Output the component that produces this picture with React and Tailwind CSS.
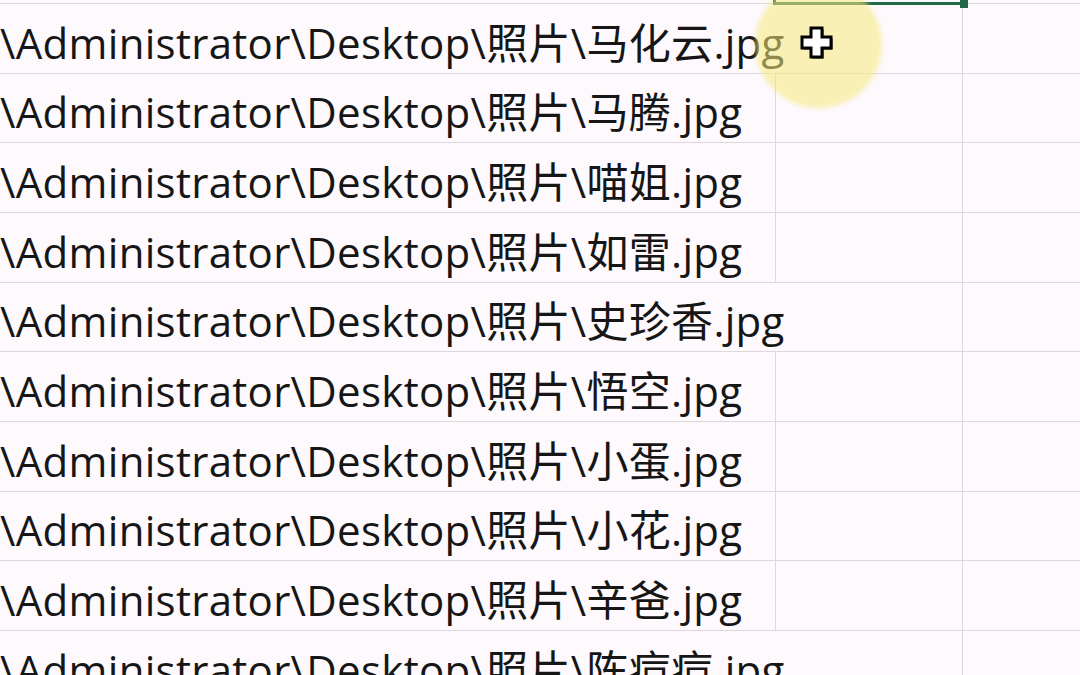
const names = ['马化云', '马腾', '喵姐', '如雷', '史珍香', '悟空', '小蛋', '小花', '辛爸', '陈痘痘'];
const overflow = ['马化云', '史珍香', '陈痘痘'];

function Row({ name }) {
  const long = overflow.includes(name);
  return (
    <div className="flex h-[69.67px] shrink-0 border-b border-[#dcd8dc]">
      <div
        className={
          'w-[776px] shrink-0 flex items-end pb-0 whitespace-nowrap overflow-visible ' +
          (long ? '' : 'border-r border-[#dcd8dc]')
        }
      >
        <span className="relative z-10 text-[42px] tracking-[0.3px] leading-[60px] text-[#161616] font-['Open_Sans','Noto_Sans_CJK_SC',sans-serif]">
          \Administrator\Desktop\照片\{name}.jpg
        </span>
      </div>
      <div className="w-[187px] shrink-0 border-r border-[#dcd8dc]" />
      <div className="flex-1" />
    </div>
  );
}

function Cursor() {
  return (
    <svg width="36" height="36" viewBox="0 0 36 36" className="absolute left-[799px] top-[25px] z-30">
      <path d="M12 3h11v9h9v11h-9v9H12v-9H3V12h9z" fill="#111" transform="translate(1.5 1.5)" />
      <path d="M12 3h11v9h9v11h-9v9H12v-9H3V12h9z" fill="#fff" stroke="#000" strokeWidth="3" strokeLinejoin="miter" />
    </svg>
  );
}

export default function App() {
  return (
    <div className="relative w-[1080px] h-[675px] overflow-hidden bg-[#fdf9fd]">
      <div className="flex flex-col">
        <div className="h-[4px] shrink-0 border-b border-[#dcd8dc]" />
        {names.map((n) => (
          <Row key={n} name={n} />
        ))}
      </div>

      {/* selected cell outline */}
      <div className="absolute left-[773px] top-[-20px] w-[194px] h-[25px] border-[3px] border-[#22694a] z-20" />
      <div className="absolute left-[960px] top-0 w-[8px] h-[8px] bg-[#22694a] z-20" />

      {/* click highlight */}
      <div className="absolute left-[755px] top-[-19px] w-[127px] h-[127px] rounded-full bg-[#f5e97a]/55 blur-[2px] z-20" />

      <Cursor />
    </div>
  );
}
